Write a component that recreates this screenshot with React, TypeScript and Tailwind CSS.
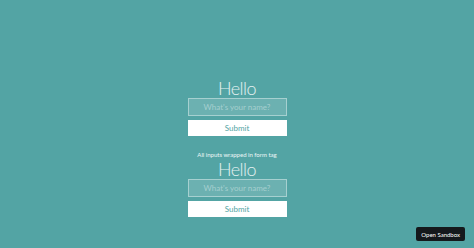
export default function App() {
  const Form = () => (
    <div className="flex flex-col items-center">
      <h1 className="text-[18px] leading-[20px] font-light tracking-[-0.5px] text-white/85">Hello</h1>
      <input
        type="text"
        placeholder="What's your name?"
        className="w-[99px] h-[18px] bg-white/15 border border-white/40 text-center text-[8px] text-white placeholder:text-white/40 outline-none"
      />
      <button className="mt-[4px] w-[99px] h-[16px] bg-white text-[8px] text-[#53a4a4]">
        Submit
      </button>
    </div>
  );

  return (
    <div
      className="relative w-[474px] h-[248px] bg-[#53a4a4] overflow-hidden"
      style={{ fontFamily: "Lato, 'Open Sans', sans-serif" }}
    >
      <div className="flex flex-col items-center pt-[78px]">
        <Form />
        <p className="mt-[15px] text-[6px] leading-[8px] text-white/90">All inputs wrapped in form tag</p>
        <Form />
      </div>
      <button className="absolute right-[9px] bottom-[7px] h-[14px] px-[5px] rounded-[2px] bg-[#15191c] text-white text-[6px]">
        Open Sandbox
      </button>
    </div>
  );
}
